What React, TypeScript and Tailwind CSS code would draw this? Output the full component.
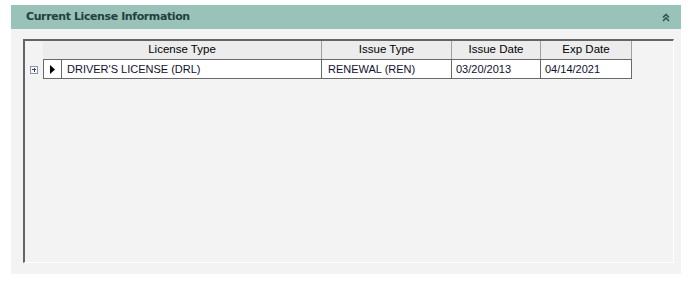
import React from "react";

const cellFont = { fontFamily: '"Liberation Sans", Arial, sans-serif' };

export default function App() {
  return (
    <div className="w-[699px] h-[283px] bg-white pt-[5px] pl-[11px]" style={cellFont}>
      <div className="w-[670px]">
        <div className="h-[24px] bg-[#99c3b8] flex items-center justify-between pl-[15px] pr-[11px]">
          <span className="text-[11px] font-bold text-[#22403f] tracking-[-0.4px]" style={{ fontFamily: '"DejaVu Sans", "Liberation Sans", sans-serif' }}>
            Current License Information
          </span>
          <svg width="8" height="9" viewBox="0 0 8 9" className="mt-[1px]">
            <path d="M1 4.5 L4 1.5 L7 4.5 M1 8 L4 5 L7 8" fill="none" stroke="#2e5654" strokeWidth="1.6" />
          </svg>
        </div>
        <div className="h-[245px] bg-[#f3f3f3] pt-[10px] pl-[12px]">
          <div className="w-[651px] h-[224px] border-l-2 border-t-2 border-[#646464] border-r border-b border-r-white border-b-white">
            <div className="flex text-[11.5px] text-black">
              <div className="w-[18px]" />
              <div className="w-[279px] h-[18px] bg-[#ececec] border-r border-[#a0a0a0] flex items-center justify-center">
                License Type
              </div>
              <div className="w-[130px] h-[18px] bg-[#ececec] border-r border-[#a0a0a0] flex items-center justify-center">
                Issue Type
              </div>
              <div className="w-[89px] h-[18px] bg-[#ececec] border-r border-[#a0a0a0] flex items-center justify-center">
                Issue Date
              </div>
              <div className="w-[91px] h-[18px] bg-[#ececec] border-r border-[#a0a0a0] flex items-center justify-center">
                Exp Date
              </div>
            </div>
            <div className="flex text-[11px] text-[#101030]">
              <div className="w-[18px] h-[20px] flex items-center justify-center">
                <div className="w-[8px] h-[8px] border border-[#8a94a6] bg-[#f8f8fa] relative mt-[2px]">
                  <div className="absolute left-[1px] top-[2px] w-[4px] h-px bg-[#36466a]" />
                  <div className="absolute left-[2.5px] top-[0.5px] w-px h-[4px] bg-[#36466a]" />
                </div>
              </div>
              <div className="flex border-t border-b border-l border-[#696969] bg-white h-[20px]">
                <div className="w-[18px] border-r border-[#696969] flex items-center justify-center">
                  <svg width="5" height="9" viewBox="0 0 5 9">
                    <path d="M0 0 L5 4.5 L0 9 Z" fill="#000" />
                  </svg>
                </div>
                <div className="w-[260px] border-r border-[#696969] flex items-center pl-[5px]">
                  DRIVER'S LICENSE (DRL)
                </div>
                <div className="w-[130px] border-r border-[#696969] flex items-center pl-[6px]">
                  RENEWAL (REN)
                </div>
                <div className="w-[89px] border-r border-[#696969] flex items-center pl-[4px]">
                  03/20/2013
                </div>
                <div className="w-[91px] border-r border-[#696969] flex items-center pl-[4px]">
                  04/14/2021
                </div>
              </div>
            </div>
          </div>
        </div>
      </div>
    </div>
  );
}
